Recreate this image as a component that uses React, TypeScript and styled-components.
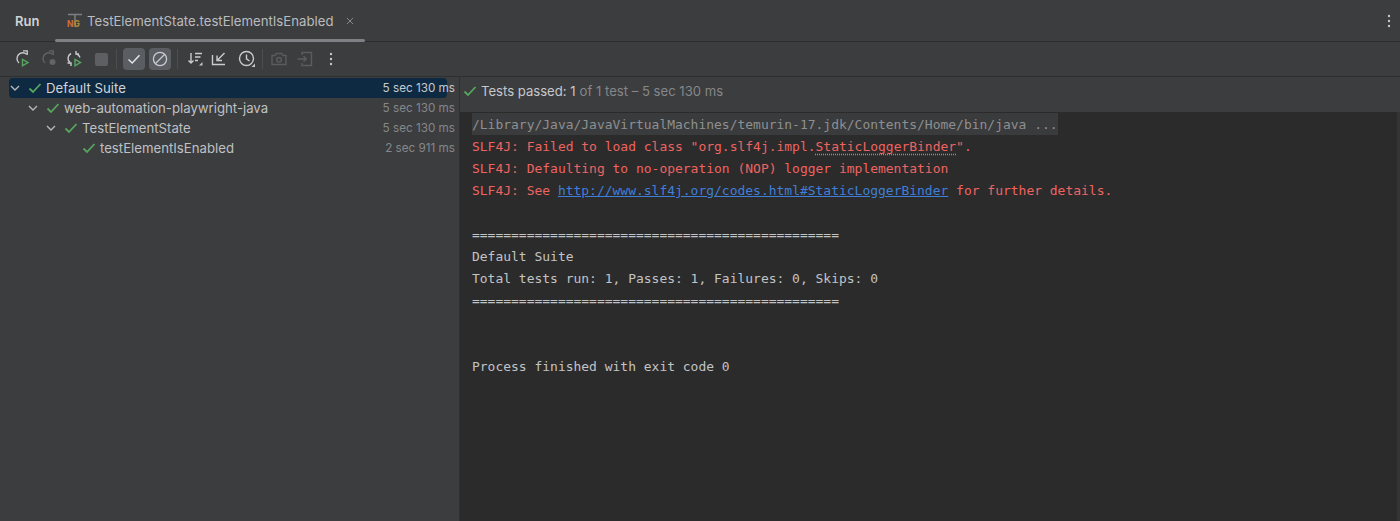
import React from "react";
import styled, { createGlobalStyle } from "styled-components";

const Global = createGlobalStyle`
  html, body { margin: 0; padding: 0; background: #3c3d3f; }
  #root { width: 1400px; height: 521px; overflow: hidden; }
`;
const Page = styled.div`
  width: 1400px; height: 521px; display: flex; flex-direction: column;
  background: #3c3d3f; color: #c4c6c9;
  font-family: Inter, "Liberation Sans", sans-serif; font-size: 13.2px;
`;
const TabBar = styled.header`
  height: 41px; flex: none; display: flex; align-items: stretch; padding-left: 15px;
  border-bottom: 1px solid #2c2d2f; position: relative;
`;
const RunTitle = styled.div`
  width: 52px; line-height: 43px; font-weight: 600; font-size: 13px; color: #d0d2d5;
`;
const Tab = styled.div`
  width: 310px; margin-left: -12px; padding-left: 12px; box-sizing: border-box; display: flex; align-items: center; gap: 4px;
  position: relative; color: #b9bbbe; padding-top: 1px;
  &::after { content: ""; position: absolute; left: 0; right: 0; bottom: -1px; height: 3px; border-radius: 2px; background: #7d8084; }
`;
const TabClose = styled.span`
  display: flex; margin-left: 9px;
`;
const TabLogo = styled.span`
  position: relative; width: 16px; height: 16px; flex: none; display: block;
`;
const LogoLetters = styled.span`
  position: absolute; left: 0; bottom: 0; font-size: 8.5px; line-height: 10px; font-weight: 800; color: #c8693a;
  b { color: #a88a3a; font-weight: 800; }
`;
const Spacer = styled.div` flex: 1; `;
const KebabTop = styled.div` display: flex; align-items: center; padding-right: 4px; `;
const Toolbar = styled.nav`
  height: 34px; flex: none; display: flex; align-items: center; padding-left: 10px;
  border-bottom: 1px solid #2d2e30;
`;
const ToolIcon = styled.span<{ $on?: boolean; $w?: number }>`
  width: ${(p) => p.$w ?? 26}px; height: 22px; flex: none; display: flex; align-items: center; justify-content: center;
  border-radius: 4px; background: ${(p) => (p.$on ? "#5a5d62" : "transparent")};
`;
const ToolSep = styled.span<{ $l: number; $r: number }>`
  width: 1px; height: 20px; background: #4b4d50; flex: none;
  margin: 0 ${(p) => p.$r}px 0 ${(p) => p.$l}px;
`;
const Gap = styled.span` width: 4px; flex: none; `;
const Main = styled.div` flex: 1; display: flex; min-height: 0; `;
const TreePane = styled.aside`
  width: 459px; flex: none; padding-top: 1px; border-right: 1px solid #2f3032;
`;
const Row = styled.div<{ $sel?: boolean; $depth: number }>`
  height: 20px; display: flex; align-items: center; position: relative; margin-left: 9px; margin-right: 12px;
  padding-left: ${(p) => p.$depth * 18}px; border-radius: 4px; background: ${(p) => (p.$sel ? "#0e2a42" : "transparent")};
  color: ${(p) => (p.$sel ? "#d2d4d7" : "#bfc1c4")};
`;
const Chevron = styled.span` width: 19px; flex: none; display: flex; justify-content: flex-start; `;
const Label = styled.span` margin-left: 4px; `;
const Time = styled.span<{ $sel?: boolean }>`
  position: absolute; right: -8px; font-size: 11.7px; color: ${(p) => (p.$sel ? "#c8cacd" : "#85878a")};
`;
const Output = styled.section` flex: 1; display: flex; flex-direction: column; min-width: 0; `;
const Status = styled.div`
  height: 35px; flex: none; display: flex; align-items: center; padding: 0 0 7px 3px; gap: 4px; font-size: 13.12px; box-sizing: border-box;
  color: #c6c8cb; span { color: #85878a; }
`;
const Console = styled.pre`
  flex: 1; margin: 0; background: #2b2b2c; padding: 2px 0 0 12px; border-right: 3px solid #333436;
  font-family: "DejaVu Sans Mono", "Liberation Mono", monospace; font-size: 12.98px; line-height: 22px; color: #c2c3c5;
`;
const CmdLine = styled.span`
  display: inline-block; height: 21px; line-height: 22px; vertical-align: top; background: #3a3b3c; color: #8e8f91;
  box-shadow: 0 -1px 0 #3a3b3c;
`;
const Err = styled.span` color: #ee6461; `;
const ErrDotted = styled.span` text-decoration: underline dotted #8e8f91; text-underline-offset: 3px; `;
const Link = styled.a` color: #3f7fd9; text-decoration: underline; `;

const Check = ({ s = 14, c = "#57a55f" }: { s?: number; c?: string }) => (
  <svg width={s} height={s} viewBox="0 0 14 14" fill="none"><path d="M1.500 7.500 5 11 12.500 3" stroke={c} strokeWidth="1.800" /></svg>
);
const Down = ({ c = "#b5b7ba" }: { c?: string }) => (
  <svg width="12" height="12" viewBox="0 0 12 12" fill="none"><path d="M2 4 6 8 10 4" stroke={c} strokeWidth="1.400" /></svg>
);
const Kebab = ({ c = "#c4c6c9" }: { c?: string }) => (
  <svg width="14" height="14" viewBox="0 0 14 14" fill={c}><circle cx="7" cy="2" r="1.200" /><circle cx="7" cy="7" r="1.200" /><circle cx="7" cy="12" r="1.200" /></svg>
);
const Corner = () => <path d="M17 17H13.500L17 13.500Z" fill="#c4c6c9" stroke="none" />;
const I = ({ children }: { children: React.ReactNode }) => (
  <svg width="18" height="18" viewBox="0 0 18 18" fill="none" strokeWidth="1.400" stroke="#c9cbce">{children}</svg>
);

const tree = [
  { name: "Default Suite", time: "5 sec 130 ms", depth: 0, sel: true, chev: true },
  { name: "web-automation-playwright-java", time: "5 sec 130 ms", depth: 1, chev: true },
  { name: "TestElementState", time: "5 sec 130 ms", depth: 2, chev: true },
  { name: "testElementIsEnabled", time: "2 sec 911 ms", depth: 3, chev: false },
];

export default function App() {
  return (
    <Page>
      <Global />
      <TabBar>
        <RunTitle>Run</RunTitle>
        <Tab>
          <TabLogo>
            <svg width="16" height="16" viewBox="0 0 16 16" fill="none" stroke="#7c8084" strokeWidth="1.500"><path d="M1 1.500H15M8 1.500V14" /></svg>
            <LogoLetters>N<b>G</b></LogoLetters>
          </TabLogo>
          TestElementState.testElementIsEnabled
          <TabClose>
            <svg width="8" height="8" viewBox="0 0 9 9" stroke="#8f9194" strokeWidth="1"><path d="M1 1 8 8M8 1 1 8" /></svg>
          </TabClose>
        </Tab>
        <Spacer />
        <KebabTop><Kebab /></KebabTop>
      </TabBar>
      <Toolbar>
        <ToolIcon><I><path d="M12.600 4.200A5.400 5.400 0 1 0 5 13" /><path d="M9 .9h4.200v4.200" /><path d="M8.500 9.500v6.200L14 12.600Z" stroke="#57a55f" /></I></ToolIcon>
        <ToolIcon><I><g stroke="#626467"><path d="M12.600 4.200A5.400 5.400 0 1 0 5 13" /><path d="M9 .9h4.200v4.200" /></g><circle cx="12.500" cy="12" r="3" fill="#626467" stroke="none" /></I></ToolIcon>
        <ToolIcon><I><path d="M5 3.500A5.400 5.400 0 0 0 4 12.500" /><path d="M1.500 13h3.500v3" /><path d="M10 1v3h3M14 7.500A5 5 0 0 0 10.500 4" /><path d="M9 9.500v6.200L14.500 12.600Z" stroke="#57a55f" /></I></ToolIcon>
        <ToolIcon><svg width="13" height="13" viewBox="0 0 13 13"><rect width="13" height="13" rx="2" fill="#5d5f62" /></svg></ToolIcon>
        <ToolSep $l={2} $r={6} />
        <ToolIcon $on $w={22}><svg width="14" height="14" viewBox="0 0 14 14" fill="none"><path d="M1.500 7.500 5.200 11 12.500 3.200" stroke="#e2e3e5" strokeWidth="1.500" /></svg></ToolIcon>
        <Gap />
        <ToolIcon $on $w={22}><svg width="16" height="16" viewBox="0 0 16 16" fill="none" stroke="#c9cbce" strokeWidth="1.300"><circle cx="8" cy="8" r="6.600" /><path d="M3.500 12.500 12.500 3.500" /></svg></ToolIcon>
        <ToolSep $l={6} $r={7} />
        <ToolIcon $w={22}><I><path d="M4 3v10M1.500 10.500 4 13l2.500-2.500M8 3.500h7M8 7h5.500M8 10.500h3" /><path d="M15.500 15.500H12L15.500 12Z" fill="#c4c6c9" stroke="none" /></I></ToolIcon>
        <ToolIcon $w={24}><I><path d="M2.500 5v9.500H15M14.500 3 7 10.500M7 5.500v5h5" /></I></ToolIcon>
        <ToolIcon $w={31}><I><circle cx="8.500" cy="8.500" r="7" /><path d="M8.500 4.500v4.300l3 2.200" /><Corner /></I></ToolIcon>
        <ToolSep $l={0} $r={3} />
        <ToolIcon><I><g stroke="#5a5c5f"><path d="M2 5.500h3L6.200 3.500h5.600L13 5.500h3v9H2Z" /><circle cx="9" cy="9.800" r="2.300" /></g></I></ToolIcon>
        <ToolIcon><I><g stroke="#5a5c5f"><path d="M6 5V2.500h9.500v13H6V13M1.500 9H10M7.500 6.200 10.300 9 7.500 11.800" /></g></I></ToolIcon>
        <ToolIcon $w={26}><Kebab /></ToolIcon>
      </Toolbar>
      <Main>
        <TreePane>
          {tree.map((r) => (
            <Row key={r.name} $sel={r.sel} $depth={r.depth}>
              <Chevron>{r.chev && <Down />}</Chevron>
              <Check />
              <Label>{r.name}</Label>
              <Time $sel={r.sel}>{r.time}</Time>
            </Row>
          ))}
        </TreePane>
        <Output>
          <Status>
            <Check />
            Tests passed: 1 <span>of 1 test – 5 sec 130 ms</span>
          </Status>
          <Console>
            <CmdLine>/Library/Java/JavaVirtualMachines/temurin-17.jdk/Contents/Home/bin/java ...</CmdLine>
            {"\n"}
            <Err>SLF4J: Failed to load class "org.slf4j.impl.<ErrDotted>StaticLoggerBinder</ErrDotted>".</Err>
            {"\n"}
            <Err>SLF4J: Defaulting to no-operation (NOP) logger implementation</Err>
            {"\n"}
            <Err>SLF4J: See <Link>http://www.slf4j.org/codes.html#StaticLoggerBinder</Link> for further details.</Err>
            {"\n\n===============================================\nDefault Suite\nTotal tests run: 1, Passes: 1, Failures: 0, Skips: 0\n===============================================\n\n\nProcess finished with exit code 0"}
          </Console>
        </Output>
      </Main>
    </Page>
  );
}
